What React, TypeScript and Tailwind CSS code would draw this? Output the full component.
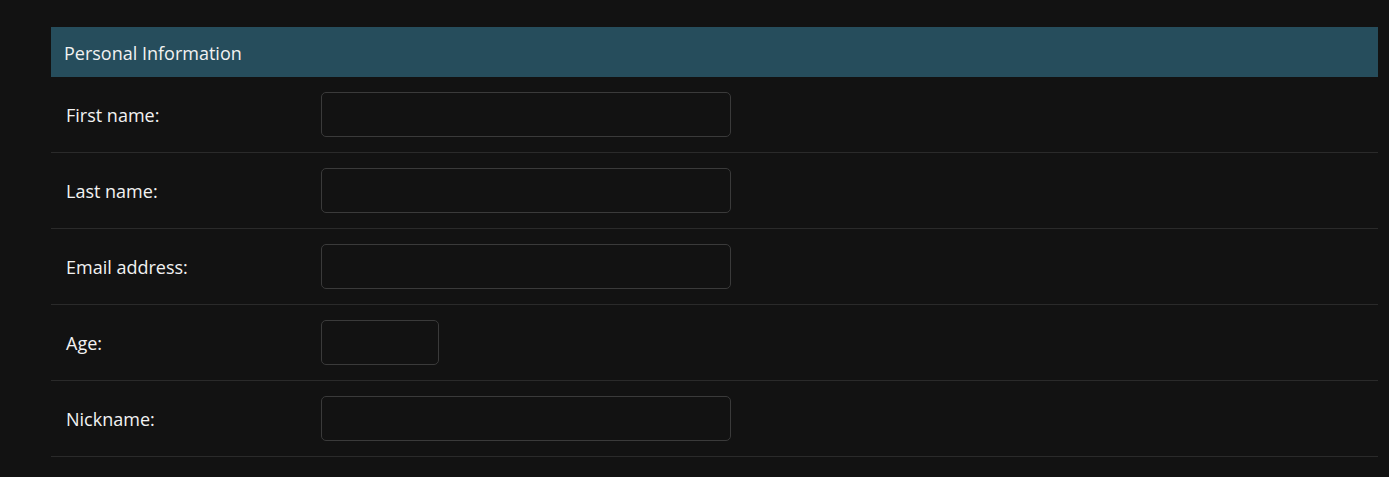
import React from "react";

const fields = [
  { label: "First name:", width: "w-[410px]" },
  { label: "Last name:", width: "w-[410px]" },
  { label: "Email address:", width: "w-[410px]" },
  { label: "Age:", width: "w-[118px]" },
  { label: "Nickname:", width: "w-[410px]" },
];

export default function App() {
  return (
    <div
      className="min-h-screen bg-[#121212] pl-[51px] pr-[11px] pt-[27px] text-[#f2f2f2]"
      style={{ fontFamily: '"Open Sans", "Noto Sans", sans-serif' }}
    >
      <div className="flex h-[50px] items-center bg-[#264d5c] pl-[13px] pt-[2px] text-[18px]">
        Personal Information
      </div>
      {fields.map((f) => (
        <div key={f.label} className="flex h-[76px] items-center border-b border-[#2a2a2a]">
          <label className="w-[270px] pl-[15px] pt-[2px] text-[18px]">{f.label}</label>
          <input
            type="text"
            className={`${f.width} h-[45px] rounded-[5px] border border-[#3a3a3a] bg-[#121212] outline-none`}
          />
        </div>
      ))}
    </div>
  );
}
